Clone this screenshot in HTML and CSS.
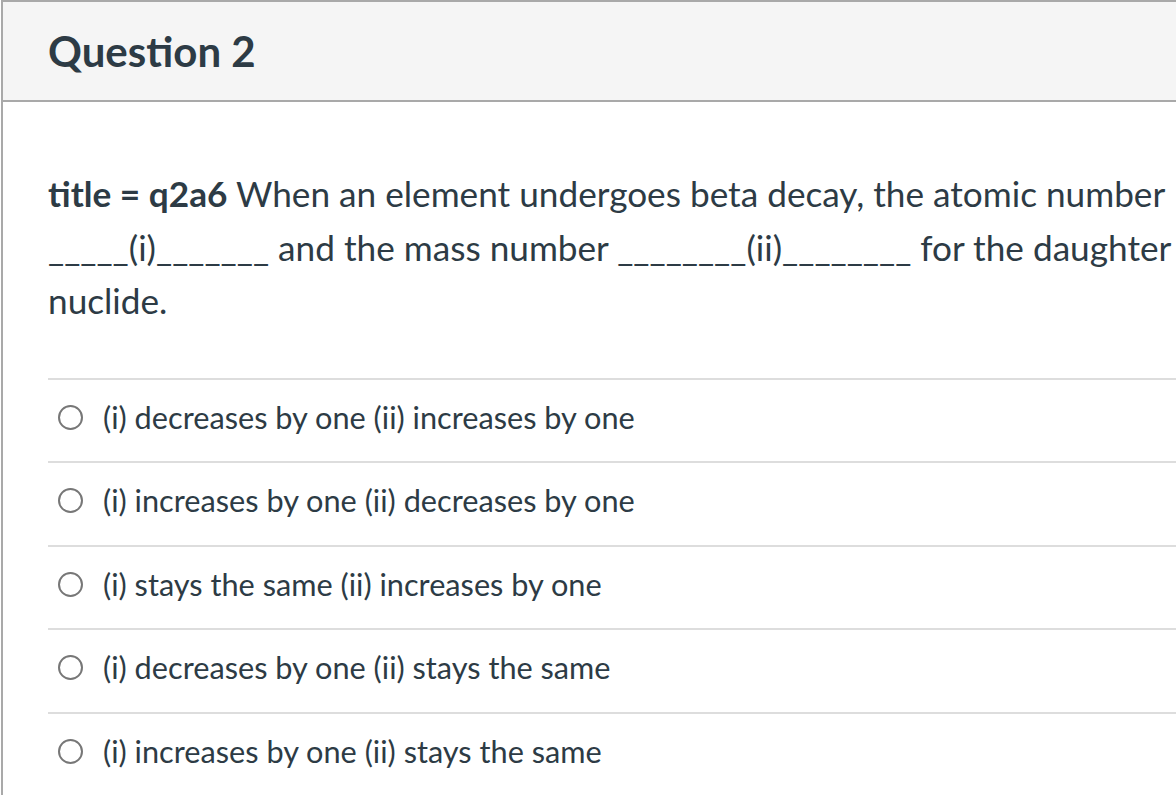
FILE: index.html
```html
<!DOCTYPE html>
<html>
<head>
<meta charset="utf-8">
<link rel="stylesheet" href="styles.css">
</head>
<body>
<div class="quiz">
  <div class="question">
    <div class="q-header">
      <h2 class="q-title">Question 2</h2>
    </div>
    <div class="q-body">
      <p class="q-text"><strong>title = q2a6</strong> When an element undergoes beta decay, the atomic number _____(i)_______ and the mass number ________(ii)________ for the daughter nuclide.</p>
      <div class="answers">
        <label class="answer"><span class="radio"></span><span class="answer-text">(i) decreases by one (ii) increases by one</span></label>
        <label class="answer"><span class="radio"></span><span class="answer-text">(i) increases by one (ii) decreases by one</span></label>
        <label class="answer"><span class="radio"></span><span class="answer-text">(i) stays the same (ii) increases by one</span></label>
        <label class="answer"><span class="radio"></span><span class="answer-text">(i) decreases by one (ii) stays the same</span></label>
        <label class="answer"><span class="radio"></span><span class="answer-text">(i) increases by one (ii) stays the same</span></label>
      </div>
    </div>
  </div>
</div>
</body>
</html>
```
FILE: styles.css
```css
html, body {
  margin: 0;
  padding: 0;
  background: #ffffff;
  overflow: hidden;
}
body {
  font-family: Lato, "Open Sans", "Liberation Sans", sans-serif;
  color: #2d3b45;
}
.quiz {
  padding-left: 1px;
}
.question {
  width: 1240px;
  border-left: 2px solid #a9a9a9;
  border-top: 2px solid #a9a9a9;
}
.q-header {
  background: #f5f5f5;
  height: 98px;
  border-bottom: 2px solid #a9a9a9;
  display: flex;
  align-items: center;
  padding-left: 45px;
}
.q-title {
  margin: 0;
  font-size: 42px;
  font-weight: 700;
  line-height: 1;
}
.q-body {
  padding: 65px 0 0 45px;
}
.q-text {
  margin: 0;
  font-size: 35.2px;
  line-height: 53.5px;
  width: 1140px;
}
.q-text strong {
  font-weight: 700;
}
.answers {
  margin-top: 50px;
}
.answer {
  display: flex;
  align-items: center;
  height: 75.5px;
  padding-bottom: 6px;
  border-top: 2px solid #dddddd;
}
.radio {
  width: 25px;
  height: 25px;
  border: 2px solid #777777;
  border-radius: 50%;
  box-sizing: border-box;
  margin-left: 10px;
  margin-right: 20px;
  flex: none;
}
.answer-text {
  font-size: 30.7px;
}
```
